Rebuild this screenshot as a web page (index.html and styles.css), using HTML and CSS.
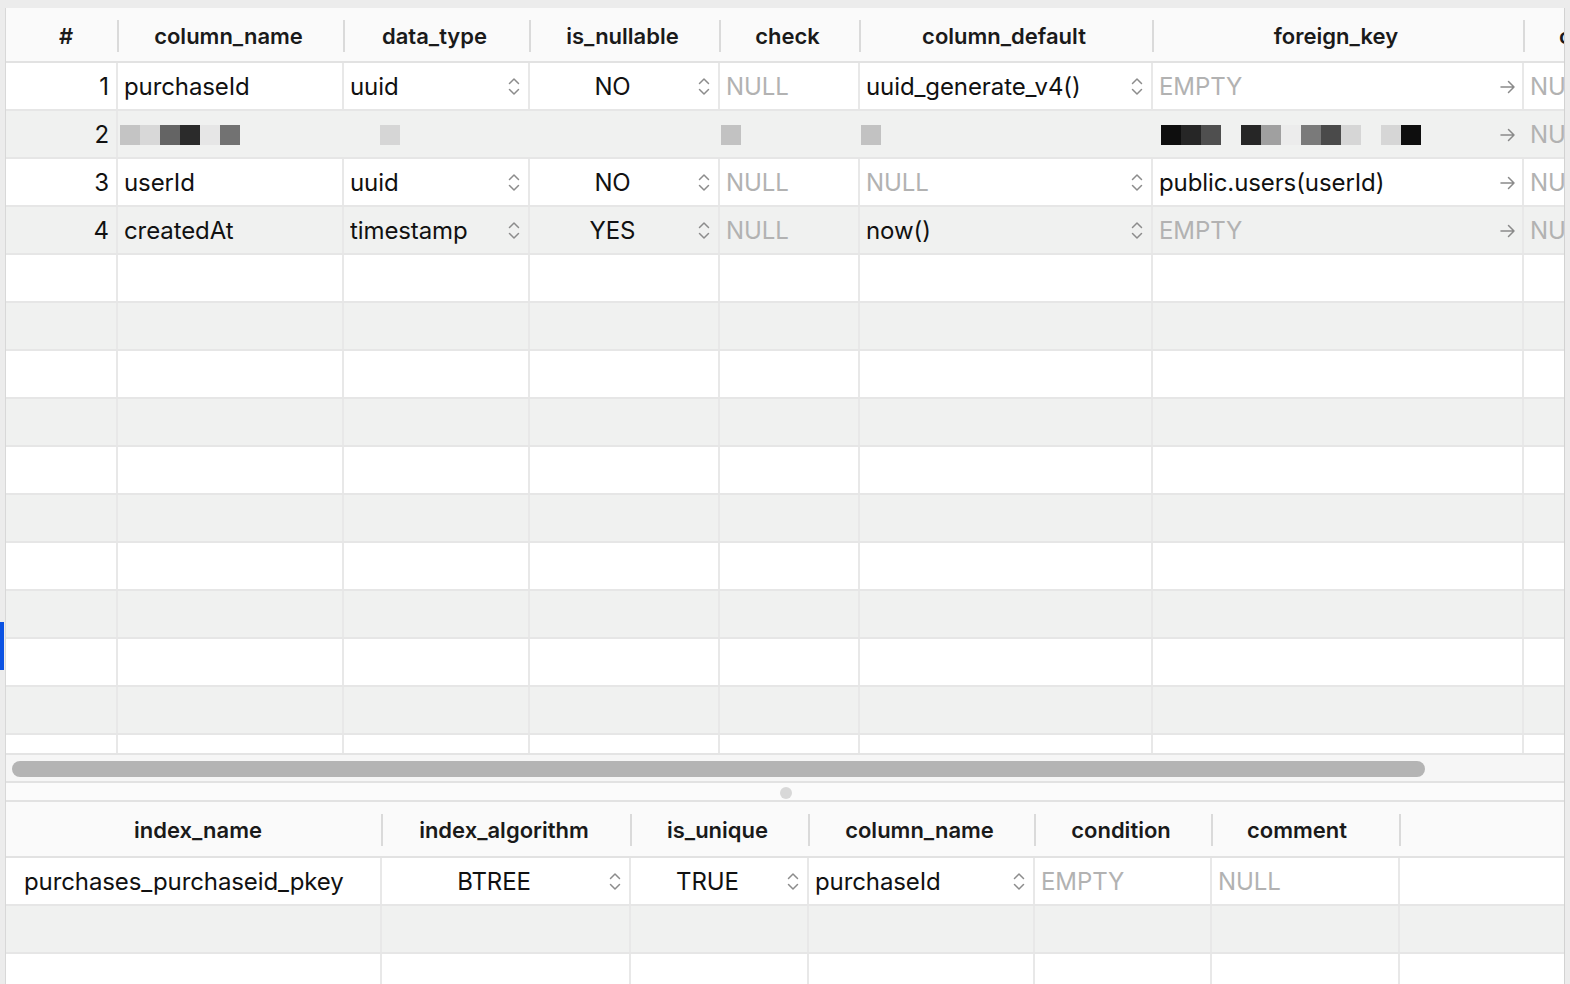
FILE: index.html
```html
<!DOCTYPE html>
<html>
<head>
<meta charset="utf-8">
<link rel="stylesheet" href="styles.css">
</head>
<body>
<div class="app">
  <div class="gutter"><div class="marker"></div></div>
  <div class="panel">
    <div class="grid top">
      <div class="row head">
        <div class="hc hash">#</div>
        <div class="hc">column_name</div>
        <div class="hc">data_type</div>
        <div class="hc">is_nullable</div>
        <div class="hc">check</div>
        <div class="hc">column_default</div>
        <div class="hc">foreign_key</div>
        <div class="hc last">comment</div>
      </div>
      <div class="row">
        <div class="c num">1</div>
        <div class="c">purchaseId</div>
        <div class="c"><span class="t">uuid</span><svg class="step" viewBox="0 0 12 21"><path d="M1.5 7.5L6 3l4.5 4.5M1.5 13.5L6 18l4.5-4.5"/></svg></div>
        <div class="c"><span class="t mid">NO</span><svg class="step" viewBox="0 0 12 21"><path d="M1.5 7.5L6 3l4.5 4.5M1.5 13.5L6 18l4.5-4.5"/></svg></div>
        <div class="c ph">NULL</div>
        <div class="c"><span class="t">uuid_generate_v4()</span><svg class="step" viewBox="0 0 12 21"><path d="M1.5 7.5L6 3l4.5 4.5M1.5 13.5L6 18l4.5-4.5"/></svg></div>
        <div class="c"><span class="t ph">EMPTY</span><svg class="arrow" viewBox="0 0 16 14"><path d="M1 7h13M8.5 1.5L14 7l-5.5 5.5"/></svg></div>
        <div class="c ph">NULL</div>
      </div>
      <div class="row blur">
        <div class="c num">2</div>
        <div class="c pxn"><span class="px" style="background:#c4c4c4"></span><span class="px" style="background:#d8d8d8"></span><span class="px" style="background:#646464"></span><span class="px" style="background:#2b2b2b"></span><span class="px" style="background:#e6e6e6"></span><span class="px" style="background:#727272"></span></div>
        <div class="c pxc"><span class="px gap"></span><span class="px" style="background:#d6d6d6"></span></div>
        <div class="c"></div>
        <div class="c pxc0"><span class="px" style="background:#c2c2c2"></span></div>
        <div class="c pxc0"><span class="px" style="background:#c2c2c2"></span></div>
        <div class="c pxc1"><span class="px" style="background:#0e0e0e"></span><span class="px" style="background:#262626"></span><span class="px" style="background:#4f4f4f"></span><span class="px gap"></span><span class="px" style="background:#262626"></span><span class="px" style="background:#a0a0a0"></span><span class="px" style="background:#ececec"></span><span class="px" style="background:#7a7a7a"></span><span class="px" style="background:#4a4a4a"></span><span class="px" style="background:#d6d6d6"></span><span class="px gap"></span><span class="px" style="background:#d6d6d6"></span><span class="px" style="background:#0e0e0e"></span><span class="t"></span><svg class="arrow" viewBox="0 0 16 14"><path d="M1 7h13M8.5 1.5L14 7l-5.5 5.5"/></svg></div>
        <div class="c ph">NULL</div>
      </div>
      <div class="row">
        <div class="c num">3</div>
        <div class="c">userId</div>
        <div class="c"><span class="t">uuid</span><svg class="step" viewBox="0 0 12 21"><path d="M1.5 7.5L6 3l4.5 4.5M1.5 13.5L6 18l4.5-4.5"/></svg></div>
        <div class="c"><span class="t mid">NO</span><svg class="step" viewBox="0 0 12 21"><path d="M1.5 7.5L6 3l4.5 4.5M1.5 13.5L6 18l4.5-4.5"/></svg></div>
        <div class="c ph">NULL</div>
        <div class="c"><span class="t ph">NULL</span><svg class="step" viewBox="0 0 12 21"><path d="M1.5 7.5L6 3l4.5 4.5M1.5 13.5L6 18l4.5-4.5"/></svg></div>
        <div class="c"><span class="t">public.users(userId)</span><svg class="arrow" viewBox="0 0 16 14"><path d="M1 7h13M8.5 1.5L14 7l-5.5 5.5"/></svg></div>
        <div class="c ph">NULL</div>
      </div>
      <div class="row">
        <div class="c num">4</div>
        <div class="c">createdAt</div>
        <div class="c"><span class="t">timestamp</span><svg class="step" viewBox="0 0 12 21"><path d="M1.5 7.5L6 3l4.5 4.5M1.5 13.5L6 18l4.5-4.5"/></svg></div>
        <div class="c"><span class="t mid">YES</span><svg class="step" viewBox="0 0 12 21"><path d="M1.5 7.5L6 3l4.5 4.5M1.5 13.5L6 18l4.5-4.5"/></svg></div>
        <div class="c ph">NULL</div>
        <div class="c"><span class="t">now()</span><svg class="step" viewBox="0 0 12 21"><path d="M1.5 7.5L6 3l4.5 4.5M1.5 13.5L6 18l4.5-4.5"/></svg></div>
        <div class="c"><span class="t ph">EMPTY</span><svg class="arrow" viewBox="0 0 16 14"><path d="M1 7h13M8.5 1.5L14 7l-5.5 5.5"/></svg></div>
        <div class="c ph">NULL</div>
      </div>
      <div class="row"><div class="c"></div><div class="c"></div><div class="c"></div><div class="c"></div><div class="c"></div><div class="c"></div><div class="c"></div><div class="c"></div></div>
      <div class="row"><div class="c"></div><div class="c"></div><div class="c"></div><div class="c"></div><div class="c"></div><div class="c"></div><div class="c"></div><div class="c"></div></div>
      <div class="row"><div class="c"></div><div class="c"></div><div class="c"></div><div class="c"></div><div class="c"></div><div class="c"></div><div class="c"></div><div class="c"></div></div>
      <div class="row"><div class="c"></div><div class="c"></div><div class="c"></div><div class="c"></div><div class="c"></div><div class="c"></div><div class="c"></div><div class="c"></div></div>
      <div class="row"><div class="c"></div><div class="c"></div><div class="c"></div><div class="c"></div><div class="c"></div><div class="c"></div><div class="c"></div><div class="c"></div></div>
      <div class="row"><div class="c"></div><div class="c"></div><div class="c"></div><div class="c"></div><div class="c"></div><div class="c"></div><div class="c"></div><div class="c"></div></div>
      <div class="row"><div class="c"></div><div class="c"></div><div class="c"></div><div class="c"></div><div class="c"></div><div class="c"></div><div class="c"></div><div class="c"></div></div>
      <div class="row"><div class="c"></div><div class="c"></div><div class="c"></div><div class="c"></div><div class="c"></div><div class="c"></div><div class="c"></div><div class="c"></div></div>
      <div class="row"><div class="c"></div><div class="c"></div><div class="c"></div><div class="c"></div><div class="c"></div><div class="c"></div><div class="c"></div><div class="c"></div></div>
      <div class="row"><div class="c"></div><div class="c"></div><div class="c"></div><div class="c"></div><div class="c"></div><div class="c"></div><div class="c"></div><div class="c"></div></div>
      <div class="row"><div class="c"></div><div class="c"></div><div class="c"></div><div class="c"></div><div class="c"></div><div class="c"></div><div class="c"></div><div class="c"></div></div>
    </div>
    <div class="hscroll"><div class="thumb"></div></div>
    <div class="splitter"><span class="dot"></span></div>
    <div class="grid bottom">
      <div class="row head">
        <div class="hc iname">index_name</div>
        <div class="hc">index_algorithm</div>
        <div class="hc">is_unique</div>
        <div class="hc">column_name</div>
        <div class="hc">condition</div>
        <div class="hc icomment">comment</div>
        <div class="hc blank"></div>
      </div>
      <div class="row">
        <div class="c first">purchases_purchaseid_pkey</div>
        <div class="c"><span class="t mid">BTREE</span><svg class="step" viewBox="0 0 12 21"><path d="M1.5 7.5L6 3l4.5 4.5M1.5 13.5L6 18l4.5-4.5"/></svg></div>
        <div class="c"><span class="t mid">TRUE</span><svg class="step" viewBox="0 0 12 21"><path d="M1.5 7.5L6 3l4.5 4.5M1.5 13.5L6 18l4.5-4.5"/></svg></div>
        <div class="c"><span class="t">purchaseId</span><svg class="step" viewBox="0 0 12 21"><path d="M1.5 7.5L6 3l4.5 4.5M1.5 13.5L6 18l4.5-4.5"/></svg></div>
        <div class="c ph">EMPTY</div>
        <div class="c ph">NULL</div>
        <div class="c"></div>
      </div>
      <div class="row"><div class="c"></div><div class="c"></div><div class="c"></div><div class="c"></div><div class="c"></div><div class="c"></div><div class="c"></div></div>
      <div class="row"><div class="c"></div><div class="c"></div><div class="c"></div><div class="c"></div><div class="c"></div><div class="c"></div><div class="c"></div></div>
    </div>
  </div>
</div>
</body>
</html>
```

FILE: styles.css
```css
* { box-sizing: border-box; }
html, body { margin: 0; padding: 0; }
body {
  width: 1570px;
  height: 984px;
  overflow: hidden;
  background: #ececec;
  font-family: Inter, "Noto Sans", "Liberation Sans", sans-serif;
  color: #111;
}
.app {
  display: flex;
  height: 984px;
  padding-top: 8px;
}
.gutter {
  width: 5px;
  flex: none;
  padding-top: 614px;
}
.marker {
  width: 4px;
  height: 48px;
  background: #0b52e3;
}
.panel {
  width: 1560px;
  flex: none;
  border-left: 1px solid #d8d8d8;
  border-right: 1px solid #d2d2d2;
  background: #fff;
  overflow: hidden;
  display: flex;
  flex-direction: column;
}
.grid { display: flex; flex-direction: column; overflow: hidden; }
.grid.top { height: 747px; border-bottom: 2px solid #e4e4e4; flex: none; }
.grid.bottom { flex: 1; }
.row {
  display: grid;
  width: max-content;
  height: 48px;
  flex: none;
  border-bottom: 2px solid #e6e6e6;
  font-size: 24px;
  letter-spacing: -0.1px;
}
.top .row { grid-template-columns: 112px 226px 186px 190px 140px 293px 371px 160px; }
.bottom .row { grid-template-columns: 376px 249px 178px 226px 177px 188px 200px; }
.row:nth-child(odd) { background: #f0f1f0; }
.row:nth-child(even) { background: #fff; }
.row.head {
  background: #fafafa;
  height: 55px;
  border-bottom: 2px solid #e2e2e2;
  font-size: 22px;
  font-weight: 600;
  letter-spacing: 0;
}
.bottom .row.head { height: 56px; }
.hc {
  display: flex;
  align-items: center;
  justify-content: center;
  position: relative;
  padding-top: 2px;
  padding-right: 5px;
  color: #1a1a1a;
}
.hc.hash { padding-left: 8px; padding-right: 0; }
.hc.iname { padding-left: 8px; padding-right: 0; }
.hc.icomment { padding-right: 18px; }
.hc::after {
  content: "";
  position: absolute;
  right: -1px;
  top: 12px;
  height: 32px;
  width: 2px;
  background: #dadada;
}
.hc.last { justify-content: flex-start; padding-left: 35px; }
.hc.last::after, .hc.blank::after { display: none; }
.c {
  display: flex;
  align-items: center;
  padding: 1px 6px 0;
  border-right: 2px solid #e8e8e8;
  white-space: nowrap;
  overflow: hidden;
}
.c.num { justify-content: flex-end; padding-right: 7px; }
.c.first { padding-left: 18px; }
.t { flex: 1; overflow: hidden; }
.t.mid { text-align: center; padding-right: 9px; }
.ph { color: #b2b2b2; }
.step {
  width: 12px;
  height: 21px;
  flex: none;
  margin-right: 2px;
  fill: none;
  stroke: #8c8c8c;
  stroke-width: 1.5;
  stroke-linecap: round;
  stroke-linejoin: round;
}
.arrow {
  width: 16px;
  height: 14px;
  flex: none;
  margin-right: 0;
  fill: none;
  stroke: #8a8a8a;
  stroke-width: 1.5;
  stroke-linecap: round;
  stroke-linejoin: round;
}
.blur .c { border-right-color: transparent; }
.blur .c.num { border-right-color: #e8e8e8; }
.px { width: 20px; height: 20px; flex: none; }
.px.gap { background: transparent; }
.pxn { padding-left: 2px; }
.pxc { padding-left: 16px; }
.pxc0 { padding-left: 1px; }
.pxc1 { padding-left: 8px; }
.hscroll {
  height: 28px;
  flex: none;
  background: #f6f6f6;
  border-bottom: 2px solid #e2e2e2;
  padding: 6px 0 0 6px;
}
.thumb {
  width: 1413px;
  height: 16px;
  border-radius: 8px;
  background: #b4b4b4;
}
.splitter {
  height: 19px;
  flex: none;
  background: #fbfbfb;
  border-bottom: 2px solid #e2e2e2;
  display: flex;
  justify-content: center;
  align-items: flex-start;
  padding-left: 2px;
  padding-top: 4px;
}
.dot {
  width: 12px;
  height: 12px;
  border-radius: 50%;
  background: #d8d8d8;
}
```
